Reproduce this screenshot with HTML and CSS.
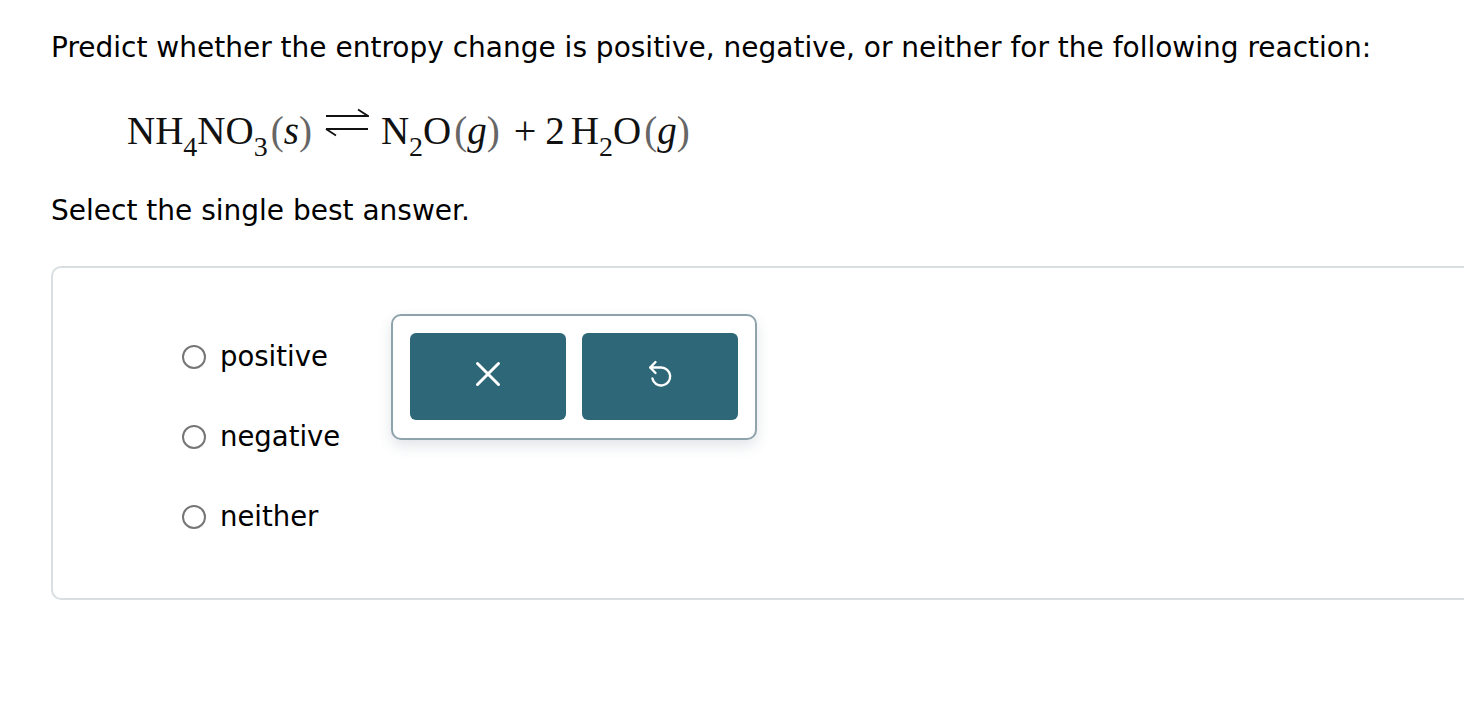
FILE: index.html
```html
<!DOCTYPE html>
<html>
<head>
<meta charset="utf-8">
<link rel="stylesheet" href="styles.css">
</head>
<body>
<main class="page">
  <p class="question">Predict whether the entropy change is positive, negative, or neither for the following reaction:</p>
  <div class="equation"><span class="chem">NH<sub>4</sub>NO<sub>3</sub></span><span class="state"><span class="paren">(</span><i>s</i><span class="paren">)</span></span><svg class="arrow" width="44" height="30" viewBox="0 0 44 30"><path d="M1 9 H43 L33 2.5 M1 22 H43 M1 22 L11 28.5" fill="none" stroke="#111" stroke-width="1.8"/></svg><span class="chem">N<sub>2</sub>O</span><span class="state"><span class="paren">(</span><i>g</i><span class="paren">)</span></span><span class="plus">+</span><span class="coef">2</span><span class="chem">H<sub>2</sub>O</span><span class="state sp"><span class="paren">(</span><i>g</i><span class="paren">)</span></span></div>
  <p class="select">Select the single best answer.</p>
  <section class="answer-box">
    <ul class="choices">
      <li class="choice"><span class="radio"></span><span class="label">positive</span></li>
      <li class="choice"><span class="radio"></span><span class="label">negative</span></li>
      <li class="choice"><span class="radio"></span><span class="label">neither</span></li>
    </ul>
    <div class="tools">
      <button class="tool" aria-label="clear">
        <svg width="26" height="26" viewBox="0 0 26 26"><path d="M2.5 2.5 L23.5 23.5 M23.5 2.5 L2.5 23.5" stroke="#fff" stroke-width="3" stroke-linecap="round"/></svg>
      </button>
      <button class="tool" aria-label="undo">
        <svg width="27" height="29" viewBox="0 0 27 29"><path d="M5.4 19.5 A9 9 0 1 0 14 8.5 H3.5" fill="none" stroke="#fff" stroke-width="2.4" stroke-linecap="round"/><path d="M8.5 3 L3.2 8.5 L8.5 14" fill="none" stroke="#fff" stroke-width="2.4" stroke-linecap="round" stroke-linejoin="round"/></svg>
      </button>
    </div>
  </section>
</main>
</body>
</html>
```

FILE: styles.css
```css
html, body {
  margin: 0;
  padding: 0;
  background: #fff;
}
body {
  font-family: "DejaVu Sans", Verdana, sans-serif;
  color: #000;
  overflow: hidden;
}
.page {
  padding: 31px 0 0 51px;
}
.question {
  margin: 0;
  font-size: 28px;
  line-height: 34px;
}
.equation {
  margin-top: 40px;
  padding-left: 76px;
  height: 52px;
  font-family: "Liberation Serif", "Times New Roman", serif;
  font-size: 39px;
  line-height: 52px;
  color: #111;
  white-space: nowrap;
}
.equation sub {
  font-size: 28px;
  vertical-align: -12px;
  line-height: 0;
}
.state {
  margin-left: 3px;
}
.state i {
  font-style: italic;
}
.paren {
  color: #666;
}
.arrow {
  display: inline-block;
  vertical-align: 7px;
  margin: 0 12px 0 13px;
}
.plus {
  margin: 0 9px 0 14px;
  font-size: 40px;
}
.coef {
  margin-right: 6px;
}
.select {
  margin: 37px 0 0;
  font-size: 28px;
  line-height: 34px;
}
.answer-box {
  box-sizing: border-box;
  margin-top: 38px;
  height: 334px;
  border: 2px solid #d9dee1;
  border-right: none;
  border-radius: 10px 0 0 10px;
  display: flex;
  align-items: flex-start;
  padding: 49px 0 0 129px;
}
.choices {
  list-style: none;
  margin: 0;
  padding: 0;
  width: 209px;
  flex: none;
}
.choice {
  height: 80px;
  display: flex;
  align-items: center;
  gap: 14px;
}
.radio {
  width: 20px;
  height: 20px;
  border: 2px solid #767676;
  border-radius: 50%;
  flex: none;
}
.label {
  font-size: 27.5px;
  line-height: 34px;
  position: relative;
  top: -1px;
}
.tools {
  display: flex;
  gap: 16px;
  padding: 17px 17px 18px;
  margin-top: -3px;
  border: 2px solid #8fa3ad;
  border-radius: 10px;
  box-shadow: 0 6px 14px rgba(40, 70, 90, 0.14);
  background: #fff;
}
.tool {
  width: 156px;
  height: 87px;
  border: none;
  border-radius: 6px;
  background: #2e6878;
  display: flex;
  align-items: center;
  justify-content: center;
  padding: 0 0 6px;
}
```
